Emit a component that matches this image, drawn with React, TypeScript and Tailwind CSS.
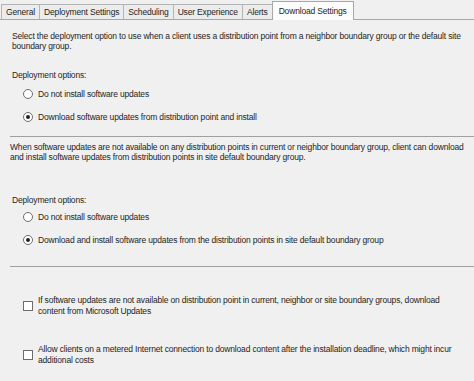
const tabs = [
  "General",
  "Deployment Settings",
  "Scheduling",
  "User Experience",
  "Alerts",
]

const Radio = ({ checked, label }: { checked?: boolean; label: string }) => (
  <div className="flex items-center h-[10px] pl-[23px]">
    <span className="flex items-center justify-center w-[10px] h-[10px] rounded-full border border-[#6d6d6d] bg-white">
      {checked && <span className="w-[4px] h-[4px] rounded-full bg-[#222]" />}
    </span>
    <span className="ml-[5px] whitespace-nowrap">{label}</span>
  </div>
)

const Check = ({ lines }: { lines: string[] }) => (
  <div className="flex items-center pl-[23px]">
    <span className="w-[10px] h-[10px] shrink-0 border border-[#6d6d6d] bg-white" />
    <div className="ml-[5px] leading-[11px]">
      {lines.map((l) => (
        <div key={l} className="whitespace-nowrap">
          {l}
        </div>
      ))}
    </div>
  </div>
)

export default function App() {
  return (
    <div
      className="w-[474px] h-[381px] overflow-hidden bg-[#f0f0f0] text-[8.5px] tracking-[-0.17px] leading-[10px] text-[#1e1e1e]"
      style={{ fontFamily: '"Liberation Sans", Arial, sans-serif' }}
    >
      <div className="flex items-end h-[20px] pl-[2px] pr-[2px] border-b border-[#a8a8a8]">
        {tabs.map((t) => (
          <div
            key={t}
            className="h-[15px] px-[4px] -ml-px flex items-center border border-b-0 border-[#b4b4b4] bg-[#ececec] whitespace-nowrap"
          >
            {t}
          </div>
        ))}
        <div className="h-[19px] px-[6px] -ml-px -mb-px flex items-center border border-b-0 border-[#a8a8a8] bg-[#fcfcfc] whitespace-nowrap">
          Download Settings
        </div>
      </div>

      <div className="mt-[11px] pl-[12px]">
        <div className="whitespace-nowrap">
          Select the deployment option to use when a client uses a distribution point from a neighbor boundary group or the default site
        </div>
        <div>boundary group.</div>
      </div>

      <div className="mt-[19px] pl-[12px]">Deployment options:</div>
      <div className="mt-[9px]">
        <Radio label="Do not install software updates" />
      </div>
      <div className="mt-[13px]">
        <Radio checked label="Download software updates from distribution point and install" />
      </div>

      <div className="mt-[14px] ml-[10px] border-t border-[#a0a0a0]" />

      <div className="mt-[5px] pl-[10px]">
        <div className="whitespace-nowrap">
          When software updates are not available on any distribution points in current or neighbor boundary group, client can download
        </div>
        <div className="whitespace-nowrap">
          and install software updates from distribution points in site default boundary group.
        </div>
      </div>

      <div className="mt-[33px] pl-[12px]">Deployment options:</div>
      <div className="mt-[7px]">
        <Radio label="Do not install software updates" />
      </div>
      <div className="mt-[13px]">
        <Radio checked label="Download and install software updates from the distribution points in site default boundary group" />
      </div>

      <div className="mt-[21px] ml-[10px] border-t border-[#a0a0a0]" />

      <div className="mt-[28px]">
        <Check
          lines={[
            "If software updates are not available on distribution point in current, neighbor or site boundary groups, download",
            "content from Microsoft Updates",
          ]}
        />
      </div>
      <div className="mt-[27px]">
        <Check
          lines={[
            "Allow clients on a metered Internet connection to download content after the installation deadline, which might incur",
            "additional costs",
          ]}
        />
      </div>
    </div>
  )
}
